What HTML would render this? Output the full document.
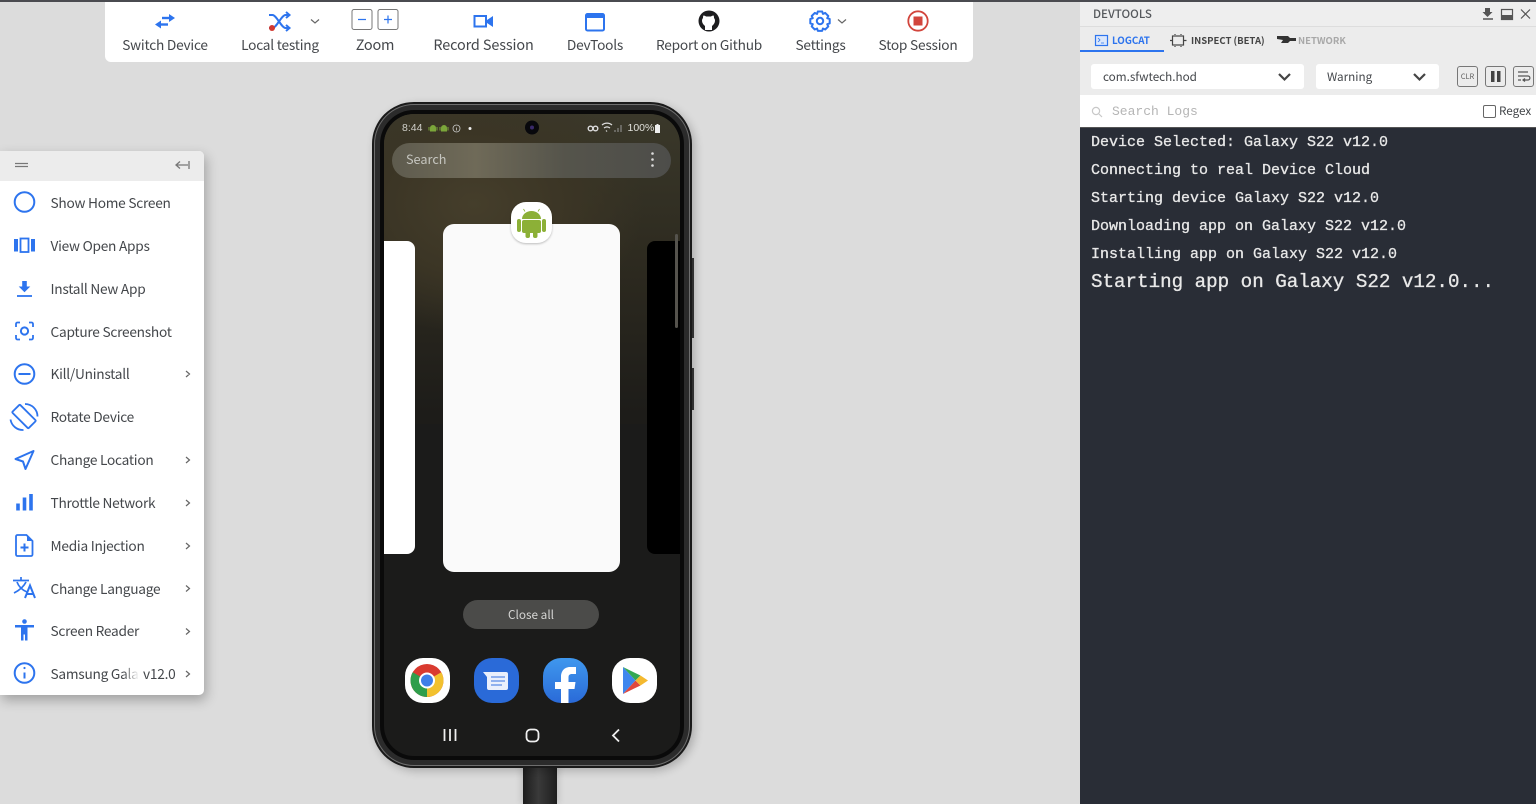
<!DOCTYPE html>
<html><head><meta charset="utf-8"><style>
*{box-sizing:border-box}
html,body{margin:0;padding:0;width:1536px;height:804px;overflow:hidden;background:#dcdcdc;font-family:"Noto Sans CJK JP","Liberation Sans",sans-serif;color:#3f4246}
.a{position:absolute}
svg{position:absolute;overflow:visible}
.t{position:absolute;white-space:nowrap;font-size:13.7px;letter-spacing:-.22px;line-height:20px;color:#44474b}
.c{transform:translateX(-50%)}
.m{position:absolute;left:50.5px;white-space:nowrap;font-size:13.7px;letter-spacing:-.25px;line-height:20px;color:#44474b}
.ch{fill:none;stroke:#666;stroke-width:1.2}
.log{position:absolute;left:1091px;font-family:"Liberation Mono",monospace;font-size:15px;line-height:20px;color:#e8e8e8;white-space:nowrap;-webkit-text-stroke:.3px #e8e8e8}
</style></head><body>
<div class="a" style="left:0;top:0;width:1536px;height:2px;background:#4a4b50"></div>

<!-- toolbar -->
<div class="a" style="left:105px;top:2px;width:868px;height:60px;background:#fff;border-radius:0 0 6px 6px"></div>
<svg style="left:0;top:0" width="1" height="1"><g fill="none" stroke="#2d74ee" stroke-width="2.400">
<path d="M162 18H170"/><path d="M169 14l6 4-6 4z" fill="#2d74ee" stroke="none"/>
<path d="M168 24.500H160"/><path d="M161 20.500l-6 4 6 4z" fill="#2d74ee" stroke="none"/>
</g><g fill="none" stroke="#2d74ee" stroke-width="2">
<path d="M269 15h3.500c4 0 9 13 13 13H288M269 28h3.500c4 0 9-13 13-13H288"/>
<path d="M286 12l3.500 3-3.500 3M286 25l3.500 3-3.500 3"/>
</g><circle cx="272" cy="28" r="3" fill="#d2382f"/>
<path d="M311 19.500l4 3.500 4-3.500" class="ch"/>
<rect x="352" y="9.500" width="20" height="20" rx="2" fill="none" stroke="#777" stroke-width="1"/>
<rect x="378" y="9.500" width="20" height="20" rx="2" fill="none" stroke="#777" stroke-width="1"/>
<path d="M358 19.500h8M384 19.500h8M388 15.500v8" stroke="#2d74ee" stroke-width="1.200"/>
<rect x="474.500" y="16" width="11.500" height="10.500" fill="none" stroke="#2d74ee" stroke-width="2"/>
<path d="M487 20l6-4v11l-6-4z" fill="#2d74ee"/>
<rect x="586" y="14" width="18" height="16.500" rx="1.500" fill="none" stroke="#2d74ee" stroke-width="2"/>
<rect x="586" y="14" width="18" height="4" fill="#2d74ee"/>
<circle cx="709" cy="21" r="10.500" fill="#1d1d1f"/>
<path d="M705 30v-4c-1-1-3-2.500-3-5.500 0-1 .5-2 1-2.500 0-1 0-2 .5-2.500 1 0 2 .5 2.500 1h5c.5-.5 1.500-1 2.500-1 .5.500 .5 1.500 .5 2.500.5.500 1 1.500 1 2.500 0 3-2 4.500-3 5.500v4z" fill="#fff"/>
<path d="M700 25c1.500 1 3 2 5 1.500v3.500c-2 0-4-2-5-5z" fill="#1d1d1f"/>
<g transform="translate(820,21)" fill="none" stroke="#2d74ee">
<path d="M-2.200-9.500h4.400l.7 2.400 2.300-1 3.100 3.100-1.100 2.200 2.500.8v4.400l-2.500.8 1.100 2.200-3.100 3.100-2.300-1-.7 2.400h-4.400l-.7-2.400-2.300 1-3.100-3.100 1.100-2.200-2.500-.8v-4.400l2.500-.8-1.100-2.200 3.100-3.100 2.300 1z" stroke-width="2" stroke-linejoin="round"/>
<circle r="3.200" stroke-width="2"/></g>
<path d="M838 19.500l4 3.500 4-3.500" class="ch"/>
<circle cx="918" cy="21" r="9.700" fill="none" stroke="#d2453c" stroke-width="1.800"/>
<rect x="913.500" y="16.500" width="9" height="9" fill="#d2453c"/>
</svg>
<div class="t c" style="left:165px;top:34px">Switch Device</div>
<div class="t c" style="left:280px;top:34px">Local testing</div>
<div class="t c" style="left:375px;top:35px;font-size:14.500px">Zoom</div>
<div class="t c" style="left:483.500px;top:35px;font-size:14.400px;letter-spacing:-.1px">Record Session</div>
<div class="t c" style="left:595px;top:34px">DevTools</div>
<div class="t c" style="left:709px;top:34px">Report on Github</div>
<div class="t c" style="left:820.500px;top:34px">Settings</div>
<div class="t c" style="left:918px;top:34px">Stop Session</div>

<!-- sidebar -->
<div class="a" style="left:0;top:151px;width:204px;height:544px;background:#fff;border-radius:0 5px 5px 0;box-shadow:2px 5px 12px rgba(0,0,0,.28)"></div>
<div class="a" style="left:0;top:151px;width:204px;height:30px;background:#ececec;border-radius:0 5px 0 0"></div>
<svg style="left:0;top:0" width="1" height="1"><g fill="none" stroke="#2d74ee" stroke-width="2">
<path d="M15 163.500h13M15 166.500h13" stroke="#777" stroke-width="1.300"/>
<path d="M176 165h12M180 161.500l-4 3.500 4 3.500M189 161v8" stroke="#777" stroke-width="1.300"/>
<circle cx="24.500" cy="202" r="9.800" stroke-width="2"/>
<rect x="20.500" y="238.500" width="8" height="13.500" stroke-width="1.800"/>
<path d="M14 239h4v12.500h-4zM31 239h4v12.500h-4z" fill="#2d74ee" stroke="none"/>
<path d="M22.200 281v5.500h-3.500l5.800 5.800 5.800-5.800h-3.500v-5.500z" fill="#2d74ee" stroke="none"/>
<path d="M17 296h15" stroke-width="1.800"/>
<path d="M16 327v-3a1.500 1.500 0 0 1 1.500-1.500H20M29 322.500h2.500A1.500 1.500 0 0 1 33 324v3M33 335v3a1.500 1.500 0 0 1-1.500 1.500H29M20 339.500h-2.500A1.500 1.500 0 0 1 16 338v-3" stroke-width="1.800"/>
<circle cx="24.500" cy="331" r="3.600" stroke-width="2"/>
<circle cx="24.500" cy="374" r="9.800"/><path d="M18.500 374h12"/>
<g transform="rotate(-45 24 416.500)"><rect x="18.500" y="405" width="11" height="23" rx="1" stroke-width="1.800"/></g>
<path d="M25 404a12.500 12.500 0 0 1 12.500 12.500M10.500 419.500a12.500 12.500 0 0 0 13 10.500" stroke-width="1.800"/>
<path d="M15.500 459l18-8-8 18-2.500-7.500z" stroke-linejoin="round"/>
<path d="M18.500 503.500v7M25 497.500v13M31.500 494v16.500" stroke-width="3.600" transform="translate(-.5,0)"/>
<path d="M18 536.500h9l6 6v13.500a1.500 1.500 0 0 1-1.500 1.500h-13.500a1.500 1.500 0 0 1-1.500-1.500v-18a1.500 1.500 0 0 1 1.500-1.500z" stroke-width="1.800" transform="translate(-.5,-1.500)"/>
<path d="M27 535v6h6z" fill="#2d74ee" stroke="none"/>
<path d="M24.500 543.500v8M20.500 547.500h8"/>
<path d="M13 580.500h16M21 577v3.500M17 582c1.500 4 5 8 10 10M26 582c-2 4-6 8-12 11" stroke-width="1.700"/>
<path d="M25.500 597l5-12.500 5 12.500M27.500 593h6" stroke-width="2" transform="translate(-.5,1)"/>
<circle cx="24.500" cy="621.500" r="2.300" fill="#2d74ee" stroke="none"/>
<path d="M15 625h19v2.500h-6.500v13h-2.500v-6h-1.500v6H21v-13h-6z" fill="#2d74ee" stroke="none"/>
<circle cx="24.500" cy="673" r="9.800"/><path d="M24.500 672.500v6"/><circle cx="24.500" cy="668" r="1.100" fill="#2d74ee" stroke="none"/>
</g>
<g class="ch"><path d="M186 371l3.500 3-3.500 3M186 457l3.500 3-3.500 3M186 500l3.500 3-3.500 3M186 543l3.500 3-3.500 3M186 585.500l3.500 3-3.500 3M186 628.500l3.500 3-3.500 3M186 671l3.500 3-3.500 3" fill="none"/></g>
</svg>
<div class="m" style="top:191.500px">Show Home Screen</div>
<div class="m" style="top:234.500px">View Open Apps</div>
<div class="m" style="top:277.500px">Install New App</div>
<div class="m" style="top:320.500px">Capture Screenshot</div>
<div class="m" style="top:363px">Kill/Uninstall</div>
<div class="m" style="top:406px">Rotate Device</div>
<div class="m" style="top:449px">Change Location</div>
<div class="m" style="top:491.500px">Throttle Network</div>
<div class="m" style="top:534.500px">Media Injection</div>
<div class="m" style="top:577.500px">Change Language</div>
<div class="m" style="top:620px">Screen Reader</div>
<div class="m" style="top:663px;width:88px;overflow:hidden;-webkit-mask-image:linear-gradient(90deg,#000 72px,transparent 88px)">Samsung Galaxy S22</div>
<div class="m" style="top:663px;left:143px">v12.0</div>

<!-- phone -->
<div class="a" style="left:523px;top:766px;width:34px;height:38px;background:linear-gradient(90deg,#1c1c1c,#3a3a3a 45%,#1e1e1e);box-shadow:0 0 8px rgba(0,0,0,.2)"></div>
<div class="a" style="left:691px;top:258px;width:3px;height:80px;background:#3a3a3a"></div>
<div class="a" style="left:691px;top:368px;width:3px;height:42px;background:#3a3a3a"></div>
<div class="a" style="left:372px;top:102px;width:320px;height:666px;background:#1a1a1a;border-radius:42px;box-shadow:3px 3px 9px rgba(0,0,0,.22)"></div>
<div class="a" style="left:374px;top:104px;width:316px;height:662px;border-radius:40px;border:1px solid #6e6e6e;background:#2b2b2b"></div>
<div class="a" style="left:380px;top:110px;width:304px;height:650px;border-radius:34px;background:#0a0a0a"></div>
<div class="a" style="left:384px;top:114px;width:296px;height:642px;border-radius:30px;overflow:hidden;background:#1b1b1a">
 <div class="a" style="left:0;top:0;width:296px;height:310px;background:radial-gradient(ellipse 170px 130px at 90px 90px,#453e2b 0,#3b3525 55%,rgba(44,41,30,0) 100%),linear-gradient(180deg,#3a382a 0,#2e2b20 140px,#1d1c19 300px)"></div>
 <div class="a" style="left:8px;top:29px;width:279px;height:35px;border-radius:18px;background:linear-gradient(90deg,#5e5b4e,#6f6a58 30%,#55544b 62%,#4d4d4a);"></div>
 <div class="a" style="left:22px;top:34px;font-size:12.700px;line-height:22px;color:#c6c6c0">Search</div>
 <div class="a" style="left:18px;top:5px;font-family:'Liberation Sans',sans-serif;font-size:10.500px;line-height:18px;color:#d0d0ca">8:44</div>
 <div class="a" style="left:243.500px;top:5px;font-family:'Liberation Sans',sans-serif;font-size:10.500px;line-height:18px;color:#e0e0da">100%</div>
 <svg style="left:0;top:0" width="1" height="1">
  <g fill="#7ba63a"><circle cx="49" cy="14" r="3"/><rect x="46" y="14" width="6" height="3.500"/><rect x="44.500" y="13" width="1" height="3.500"/><rect x="52.500" y="13" width="1" height="3.500"/>
  <circle cx="60" cy="14" r="3"/><rect x="57" y="14" width="6" height="3.500"/><rect x="55.500" y="13" width="1" height="3.500"/><rect x="63.500" y="13" width="1" height="3.500"/></g>
  <circle cx="72.500" cy="14.500" r="3.500" fill="none" stroke="#ccc" stroke-width=".8"/><path d="M72.500 13.500v3" stroke="#ccc" stroke-width=".8"/><circle cx="86" cy="14.500" r="1.500" fill="#eee"/>
  <circle cx="148" cy="13.500" r="7" fill="#08080c"/><circle cx="148" cy="13.500" r="2" fill="#3a2a6a"/>
  <circle cx="206.500" cy="14.500" r="2.300" fill="none" stroke="#ddd" stroke-width="1.400"/><circle cx="211.500" cy="14.500" r="2.300" fill="none" stroke="#ddd" stroke-width="1.400"/>
  <path d="M218 11c3-2.500 7-2.500 10 0M220 14c2-1.500 4-1.500 6 0M222 16.500l1 1" fill="none" stroke="#ddd" stroke-width="1.200"/>
  <path d="M231 18v-2M234 18v-4M237 18v-7" stroke="#999" stroke-width="1"/>
  <rect x="271" y="11" width="5" height="8" fill="#eee"/><rect x="272.500" y="10" width="2" height="1" fill="#eee"/>
  <circle cx="268.500" cy="39.500" r="1.300" fill="#ddd"/><circle cx="268.500" cy="45.500" r="1.300" fill="#ddd"/><circle cx="268.500" cy="51.500" r="1.300" fill="#ddd"/>
 </svg>
 <div class="a" style="left:0;top:127px;width:31px;height:313px;background:#fff;border-radius:0 8px 8px 0"></div>
 <div class="a" style="left:263px;top:127px;width:33px;height:313px;background:#000;border-radius:8px 0 0 8px"></div>
 <div class="a" style="left:59px;top:110px;width:177px;height:348px;background:#fafafa;border-radius:11px"></div>
 <div class="a" style="left:127px;top:88px;width:41px;height:41px;background:#fff;border-radius:15px;box-shadow:0 1px 2px rgba(0,0,0,.25)"></div>
 <svg style="left:0;top:0" width="1" height="1"><g fill="#8cb037">
  <path d="M138 105a9.500 8 0 0 1 19 0z"/><rect x="138" y="106" width="19" height="13" rx="2"/>
  <rect x="133" y="105" width="4" height="13" rx="2"/><rect x="158" y="105" width="4" height="13" rx="2"/>
  <rect x="141.500" y="116" width="4.500" height="8" rx="2"/><rect x="149" y="116" width="4.500" height="8" rx="2"/>
  <path d="M141 97.500l-1.500-2.500M154 97.500l1.500-2.500" stroke="#8cb037" stroke-width=".8"/></g>
 </svg>
 <div class="a" style="left:79px;top:486px;width:136px;height:29px;border-radius:15px;background:#4b4b49;color:#d6d6d4;font-size:11.800px;line-height:29px;text-align:center">Close all</div>
 <div class="a" style="left:21px;top:544px;width:45px;height:45px;border-radius:18px;background:#fff"></div>
 <div class="a" style="left:90px;top:544px;width:45px;height:45px;border-radius:18px;background:#2a6ad8"></div>
 <div class="a" style="left:159px;top:544px;width:45px;height:45px;border-radius:18px;background:linear-gradient(180deg,#3f98ee,#2a6ad8);overflow:hidden">
  <svg style="left:0;top:0" width="45" height="45" viewBox="0 0 45 45"><path d="M14 45V28H8v-7h6v-5c0-7 4.500-10 9-10h6v7h-4c-2.500 0-3.500 1-3.500 3.500V21h7l-1 7h-6v17z" fill="#fff" transform="translate(4,3)"/></svg>
 </div>
 <div class="a" style="left:228px;top:544px;width:45px;height:45px;border-radius:18px;background:#fff"></div>
 <svg style="left:0;top:0" width="1" height="1">
  <circle cx="43" cy="566.500" r="16.500" fill="#d93a2f"/>
  <path d="M43 566.500L57.300 558.300A16.500 16.500 0 0 1 43 583z" fill="#f2c12e"/>
  <path d="M43 566.500L43 583A16.500 16.500 0 0 1 28.700 558.300z" fill="#2f9e4b"/>
  <circle cx="43" cy="566.500" r="8" fill="#fff"/><circle cx="43" cy="566.500" r="6" fill="#3f7fe8"/>
  <path d="M99 558h23a2 2 0 0 1 2 2v14a2 2 0 0 1-2 2h-17a2 2 0 0 1-2-2v-11z" fill="#e9effc"/>
  <path d="M107 563h14M107 567h14M107 571h11" stroke="#8fb0ee" stroke-width="2"/>
  <path d="M239 553v27l12.500-13.500z" fill="#3f86ee"/>
  <path d="M239 553l12.500 13.500 5-5z" fill="#34a853"/><path d="M239 580l12.500-13.500 5 5z" fill="#e0483e"/>
  <path d="M256.500 561.500l-5 5 5 5 7.500-5z" fill="#f4b92f"/>
  <path d="M60.500 615v12M66 615v12M71.500 615v12" stroke="#eee" stroke-width="1.800"/>
  <rect x="142.500" y="615.500" width="12" height="12" rx="4" fill="none" stroke="#eee" stroke-width="1.800"/>
  <path d="M235 615.500l-6 6 6 6" fill="none" stroke="#eee" stroke-width="1.800"/>
 </svg>
</div>
<div class="a" style="left:675px;top:234px;width:3px;height:94px;background:#55534d;border-radius:2px"></div>

<!-- devtools -->
<div class="a" style="left:1080px;top:2px;width:456px;height:802px;background:#ececec"></div>
<div class="a" style="left:1080px;top:2px;width:456px;height:25px;background:#eee;border-bottom:1px solid #ddd"></div>
<div class="a" style="left:1093px;top:5px;font-size:11.500px;font-weight:500;line-height:18px;color:#55585c">DEVTOOLS</div>
<div class="a" style="left:1080px;top:50px;width:84px;height:2px;background:#2d74ee"></div>
<div class="a" style="left:1112px;top:31px;font-size:9.800px;font-weight:700;line-height:18px;color:#2d74ee">LOGCAT</div>
<div class="a" style="left:1191px;top:31px;font-size:9.500px;font-weight:700;line-height:18px;color:#444">INSPECT (BETA)</div>
<div class="a" style="left:1298px;top:31px;font-size:9.500px;font-weight:700;line-height:18px;color:#a8a8a8">NETWORK</div>
<div class="a" style="left:1091px;top:64px;width:213px;height:25px;background:#fff;border-radius:3px"></div>
<div class="a" style="left:1103px;top:66.500px;font-size:11.700px;line-height:19px;color:#44474b">com.sfwtech.hod</div>
<div class="a" style="left:1316px;top:64px;width:123px;height:25px;background:#fff;border-radius:3px"></div>
<div class="a" style="left:1327px;top:66.500px;font-size:11.700px;line-height:19px;color:#44474b">Warning</div>
<div class="a" style="left:1457px;top:66px;width:21px;height:21px;border:1px solid #777;border-radius:3px;font-size:7.500px;line-height:19px;text-align:center;color:#666">CLR</div>
<div class="a" style="left:1485px;top:66px;width:21px;height:21px;border:1px solid #777;border-radius:3px"></div>
<div class="a" style="left:1513px;top:66px;width:21px;height:21px;border:1px solid #777;border-radius:3px"></div>
<div class="a" style="left:1080px;top:95px;width:456px;height:32px;background:#fff"></div>
<div class="a" style="left:1112px;top:102px;font-family:'Liberation Mono',monospace;font-size:13px;line-height:20px;color:#b5b5b5">Search Logs</div>
<div class="a" style="left:1483px;top:105px;width:13px;height:13px;border:1px solid #666;border-radius:2px;background:#fff"></div>
<div class="a" style="left:1499px;top:101px;font-size:11.700px;line-height:19px;color:#44474b">Regex</div>
<svg style="left:0;top:0" width="1" height="1"><g fill="none" stroke="#555" stroke-width="1.200">
 <path d="M1279 74l5.500 5.500 5.500-5.500" stroke-width="2.200" stroke="#444"/>
 <path d="M1414 74l5.500 5.500 5.500-5.500" stroke-width="2.200" stroke="#444"/>
 <path d="M1521 9.500l9 9M1530 9.500l-9 9" stroke="#555"/>
 <path d="M1483 19h10" stroke-width="1.500"/>
 <rect x="1501.500" y="9.500" width="11" height="10"/>
 <path d="M1518 72h10M1518 76h10c2.500 0 2.500 4 0 4h-4M1518 80h3M1525 78.500l-2 1.500 2 1.500" stroke="#555"/>
 <circle cx="1096" cy="111" r="3.600" stroke="#c8c8c8"/><path d="M1099 114l3 3" stroke="#c8c8c8"/>
 <rect x="1095.500" y="35.500" width="12" height="10" stroke="#2d74ee" fill="#dbe7fb"/>
 <path d="M1098 38l2 2-2 2M1101 43h3" stroke="#2d74ee" stroke-width=".8"/>
 <rect x="1172.500" y="36" width="11" height="9" stroke="#444"/>
 <path d="M1170 40.500h2.500M1184 40.500h2.500M1175 35v-1M1181 35v-1M1175 46v1M1181 46v1" stroke="#444"/>
</g>
<path d="M1485 8h5v4h2.500l-5 5-5-5h2.500z" fill="#555"/>
<rect x="1501" y="15" width="12" height="5" fill="#555"/>
<path d="M1491 71h3.500v11H1491zM1497 71h3.500v11H1497z" fill="#444"/>
<path d="M1277 36h11l2 2h6v3h-6l-2 2h-7l2-3-6-1z" fill="#333"/>
</svg>
<div class="a" style="left:1080px;top:127px;width:456px;height:677px;background:#292d36;border-top:1px solid #555"></div>
<div class="log" style="top:132.500px">Device Selected: Galaxy S22 v12.0</div>
<div class="log" style="top:160.500px">Connecting to real Device Cloud</div>
<div class="log" style="top:188.500px">Starting device Galaxy S22 v12.0</div>
<div class="log" style="top:216.500px">Downloading app on Galaxy S22 v12.0</div>
<div class="log" style="top:244.500px">Installing app on Galaxy S22 v12.0</div>
<div class="log" style="top:271.500px;font-size:19.200px">Starting app on Galaxy S22 v12.0...</div>
</body></html>
